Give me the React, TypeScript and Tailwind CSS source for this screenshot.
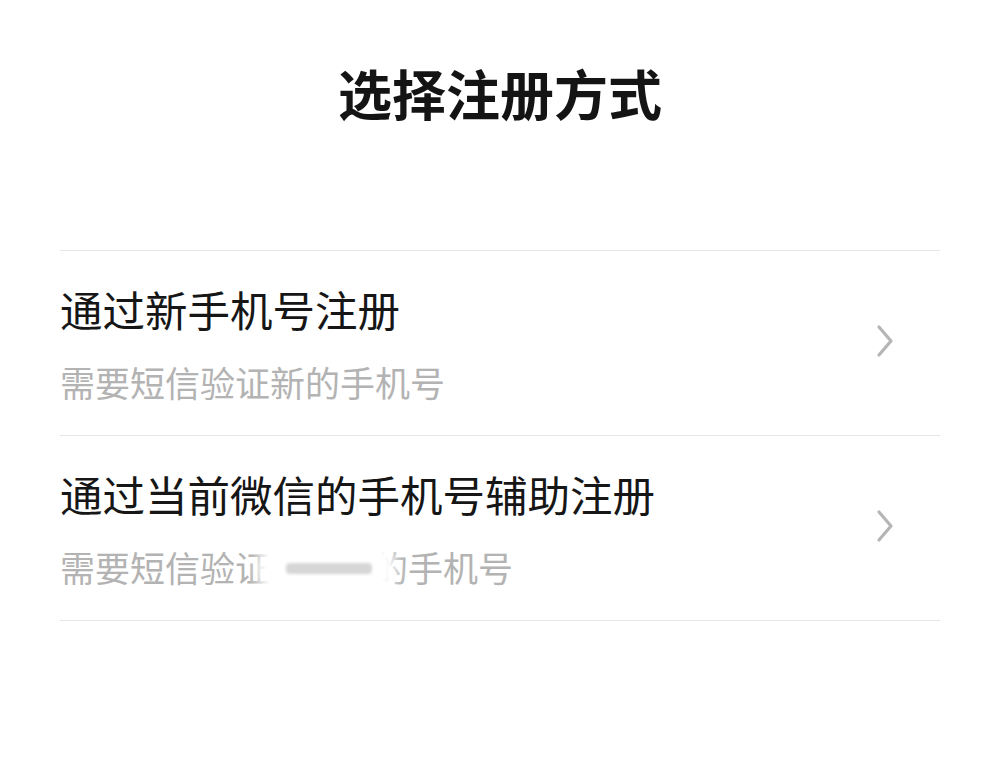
const font = { fontFamily: '"Noto Sans CJK SC", "Noto Sans", sans-serif' };

function Chevron() {
  return (
    <svg width="22" height="34" viewBox="0 0 22 34" fill="none" className="shrink-0">
      <path d="M5 3 L17 17 L5 31" stroke="#b5b5b5" strokeWidth="3.2" strokeLinecap="round" strokeLinejoin="round" />
    </svg>
  );
}

function Redacted() {
  return (
    <span className="relative inline-block w-[103px] h-[44px] align-top">
      <span className="absolute left-[-14px] right-[-24px] top-[-6px] bottom-[-10px] rounded-full bg-white blur-[6px]" />
      <span className="absolute left-[16px] w-[86px] top-[18px] h-[11px] rounded-sm bg-[#d6d6d6] blur-[1.5px]" />
    </span>
  );
}

function Row({ title, subtitle }: { title: string; subtitle: React.ReactNode }) {
  return (
    <div className="flex items-center border-b border-[#e6e6e6] pt-[30px] pb-[31px]">
      <div className="flex-1">
        <div className="text-[42.5px] leading-[56px] text-[#161616]">{title}</div>
        <div className="mt-[23px] text-[35px] leading-[44px] text-[#b3b3b3] whitespace-nowrap">{subtitle}</div>
      </div>
      <div className="pr-[44px] pb-[4px]">
        <Chevron />
      </div>
    </div>
  );
}

export default function App() {
  return (
    <div className="w-[1000px] h-[772px] bg-white" style={font}>
      <div className="pt-[55px] text-center text-[54px] leading-[76px] font-bold text-[#141414]">选择注册方式</div>
      <div className="mx-[60px] mt-[119px] border-t border-[#e6e6e6]">
        <Row title="通过新手机号注册" subtitle="需要短信验证新的手机号" />
        <Row
          title="通过当前微信的手机号辅助注册"
          subtitle={
            <>
              需要短信验证
              <Redacted />
              的手机号
            </>
          }
        />
      </div>
    </div>
  );
}
